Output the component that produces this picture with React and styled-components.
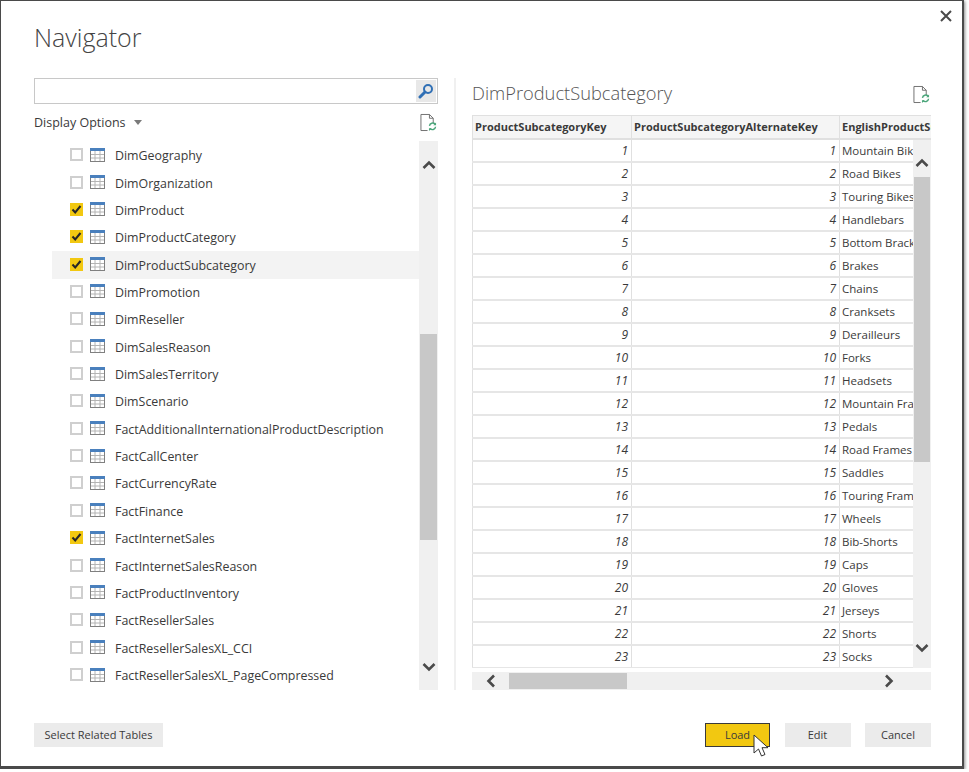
import React from "react";
import styled, { createGlobalStyle } from "styled-components";

const tables = [
  ["DimGeography", false],
  ["DimOrganization", false],
  ["DimProduct", true],
  ["DimProductCategory", true],
  ["DimProductSubcategory", true, true],
  ["DimPromotion", false],
  ["DimReseller", false],
  ["DimSalesReason", false],
  ["DimSalesTerritory", false],
  ["DimScenario", false],
  ["FactAdditionalInternationalProductDescription", false],
  ["FactCallCenter", false],
  ["FactCurrencyRate", false],
  ["FactFinance", false],
  ["FactInternetSales", true],
  ["FactInternetSalesReason", false],
  ["FactProductInventory", false],
  ["FactResellerSales", false],
  ["FactResellerSalesXL_CCI", false],
  ["FactResellerSalesXL_PageCompressed", false],
];

const subcategories = [
  "Mountain Bikes",
  "Road Bikes",
  "Touring Bikes",
  "Handlebars",
  "Bottom Brackets",
  "Brakes",
  "Chains",
  "Cranksets",
  "Derailleurs",
  "Forks",
  "Headsets",
  "Mountain Frames",
  "Pedals",
  "Road Frames",
  "Saddles",
  "Touring Frames",
  "Wheels",
  "Bib-Shorts",
  "Caps",
  "Gloves",
  "Jerseys",
  "Shorts",
  "Socks",
  "Tights",
];

const TableIcon = () => (
  <svg width="15" height="14" viewBox="0 0 15 14">
    <rect x="0.5" y="0.5" width="14" height="13" fill="#fff" stroke="#808080" />
    <rect x="0" y="0" width="15" height="3" fill="#4a80bd" />
    <path d="M5 3v10M10 3v10M1 6.500h13M1 10h13" stroke="#b4b4b4" fill="none" />
  </svg>
);

const RefreshIcon = () => (
  <svg width="17" height="19" viewBox="0 0 18 19">
    <path d="M1 1h9l4 4v5M10 1v4h4M8 18H1V1" fill="none" stroke="#6b6b6b" />
    <path d="M10 13a3.400 3.400 0 0 1 6-1.600M16.500 14a3.400 3.400 0 0 1-6 1.800" fill="none" stroke="#4aa57a" strokeWidth="1.500" />
    <path d="M17 9.500v3h-3zM9.500 18.500v-3h3z" fill="#4aa57a" />
  </svg>
);

const SearchIcon = () => (
  <svg width="16" height="16" viewBox="0 0 16 16">
    <circle cx="10" cy="6" r="4" fill="none" stroke="#2f6fb5" strokeWidth="2" />
    <path d="M7 9l-5 5" stroke="#2f6fb5" strokeWidth="3" strokeLinecap="round" />
  </svg>
);

const Chevron = ({ dir }) => {
  const paths = {
    up: "M1.500 8L7 2.500 12.500 8",
    down: "M1.500 2L7 7.500 12.500 2",
    left: "M8 1.500L2.500 7 8 12.500",
    right: "M2 1.500L7.500 7 2 12.500",
  };
  const wide = dir === "up" || dir === "down";
  return (
    <svg width={wide ? 14 : 10} height={wide ? 10 : 14} viewBox={wide ? "0 0 14 10" : "0 0 10 14"}>
      <path d={paths[dir]} fill="none" stroke="#4a4a4a" strokeWidth="2.600" />
    </svg>
  );
};

const CheckMark = () => (
  <svg width="11" height="11" viewBox="0 0 11 11">
    <path d="M1.500 5.500L4.200 8.500L9.500 2" fill="none" stroke="#262626" strokeWidth="2" />
  </svg>
);

const App = () => {
  return (
    <>
      <GlobalStyle />
      <Dialog>
        <TopBar>
          <Title>Navigator</Title>
          <CloseButton>
            <svg width="12" height="12" viewBox="0 0 12 12">
              <path d="M1 1l10 10M11 1L1 11" stroke="#4a4a4a" strokeWidth="2" />
            </svg>
          </CloseButton>
        </TopBar>
        <Body>
          <LeftPane>
            <SearchBox>
              <SearchButton>
                <SearchIcon />
              </SearchButton>
            </SearchBox>
            <OptionsRow>
              <DisplayOptions>
                Display Options
                <Caret />
              </DisplayOptions>
              <RefreshIcon />
            </OptionsRow>
            <ListArea>
              <List>
                {tables.map(([name, checked, selected]) => (
                  <ListRow key={name} $selected={selected}>
                    <Checkbox $checked={checked}>{checked && <CheckMark />}</Checkbox>
                    <TableIcon />
                    <RowLabel>{name}</RowLabel>
                  </ListRow>
                ))}
              </List>
              <VTrack $width={19}>
                <ArrowBox $height={48}>
                  <Chevron dir="up" />
                </ArrowBox>
                <VThumb $top={145} $height={206} />
                <ArrowBox $height={46} $end>
                  <Chevron dir="down" />
                </ArrowBox>
              </VTrack>
            </ListArea>
          </LeftPane>
          <Divider />
          <RightPane>
            <PreviewHead>
              <PreviewTitle>DimProductSubcategory</PreviewTitle>
              <RefreshIcon />
            </PreviewHead>
            <Grid>
              <HeaderRow>
                <HeaderCell>ProductSubcategoryKey</HeaderCell>
                <HeaderCell>ProductSubcategoryAlternateKey</HeaderCell>
                <HeaderCell>EnglishProductSubcategoryName</HeaderCell>
              </HeaderRow>
              <GridMiddle>
                <Rows>
                  {subcategories.map((name, i) => (
                    <DataRow key={name}>
                      <NumCell>{i + 1}</NumCell>
                      <NumCell>{i + 1}</NumCell>
                      <TextCell>{name}</TextCell>
                    </DataRow>
                  ))}
                </Rows>
                <VTrack $width={18}>
                  <ArrowBox $height={37} $pad={9}>
                    <Chevron dir="up" />
                  </ArrowBox>
                  <VThumb $top={0} $height={285} />
                  <ArrowBox $height={40} $end>
                    <Chevron dir="down" />
                  </ArrowBox>
                </VTrack>
              </GridMiddle>
              <HTrack>
                <HArrow $width={37}>
                  <Chevron dir="left" />
                </HArrow>
                <HThumb />
                <HArrow $width={84} $end>
                  <Chevron dir="right" />
                </HArrow>
              </HTrack>
            </Grid>
          </RightPane>
        </Body>
        <Footer>
          <FooterButton $width={129}>Select Related Tables</FooterButton>
          <FooterActions>
            <LoadButton>
              Load
              <Pointer>
                <svg width="16" height="24" viewBox="0 0 16 24">
                  <path
                    d="M1 1v18l4.500-4 3 7 3.500-1.500-3-6.800h6z"
                    fill="#fff"
                    stroke="#333"
                    strokeWidth="1"
                  />
                </svg>
              </Pointer>
            </LoadButton>
            <FooterButton $width={66}>Edit</FooterButton>
            <FooterButton $width={66}>Cancel</FooterButton>
          </FooterActions>
        </Footer>
      </Dialog>
    </>
  );
};

export default App;

const GlobalStyle = createGlobalStyle`
  html, body {
    margin: 0;
    padding: 0;
    background: #fff;
  }
  body {
    font-family: "Open Sans", "Noto Sans", sans-serif;
    color: #3a3a3a;
  }
`;

const Dialog = styled.div`
  box-sizing: border-box;
  width: 964px;
  height: 769px;
  background: #fff;
  border: solid #4a4a4a;
  border-width: 1px 2px 3px 1px;
  box-shadow: 1px 1px 3px #8a8a8a;
  padding: 0 31px 0 33px;
  display: flex;
  flex-direction: column;
`;

const TopBar = styled.div`
  height: 77px;
  display: flex;
  justify-content: space-between;
  align-items: flex-start;
`;

const Title = styled.h1`
  margin: 19px 0 0;
  font-size: 25px;
  line-height: 34px;
  font-weight: 300;
  color: #444;
`;

const CloseButton = styled.div`
  margin: 9px -21px 0 0;
  display: flex;
`;

const Body = styled.div`
  height: 612px;
  display: flex;
`;

const LeftPane = styled.div`
  width: 404px;
  display: flex;
  flex-direction: column;
`;

const SearchBox = styled.div`
  box-sizing: border-box;
  height: 26px;
  border: 1px solid #c8c8c8;
  display: flex;
  justify-content: flex-end;
  align-items: center;
  padding-right: 1px;
`;

const SearchButton = styled.div`
  width: 20px;
  height: 22px;
  background: #e8e8e8;
  display: flex;
  align-items: center;
  justify-content: center;
`;

const OptionsRow = styled.div`
  height: 37px;
  display: flex;
  justify-content: space-between;
  align-items: center;
  padding-right: 1px;
`;

const DisplayOptions = styled.div`
  font-size: 12.500px;
  display: flex;
  align-items: center;
  gap: 8px;
`;

const Caret = styled.span`
  width: 0;
  height: 0;
  border-left: 4.500px solid transparent;
  border-right: 4.500px solid transparent;
  border-top: 5px solid #7a7a7a;
`;

const ListArea = styled.div`
  flex: 1;
  display: flex;
  min-height: 0;
`;

const List = styled.div`
  flex: 1;
  margin-left: 18px;
  padding-top: 1px;
  overflow: hidden;
`;

const ListRow = styled.div`
  height: 27.370px;
  display: flex;
  align-items: center;
  padding-left: 18px;
  background: ${(p) => (p.$selected ? "#f3f3f3" : "transparent")};

  > svg {
    margin-bottom: 2px;
  }
`;

const Checkbox = styled.span`
  box-sizing: border-box;
  width: 13px;
  height: 13px;
  margin: 0 7px 2px 0;
  display: flex;
  align-items: center;
  justify-content: center;
  background: ${(p) => (p.$checked ? "#f2c811" : "#fff")};
  border: ${(p) => (p.$checked ? "1px solid #f2c811" : "2px solid #cfcfcf")};
`;

const RowLabel = styled.span`
  margin-left: 10px;
  font-size: 12.400px;
  white-space: nowrap;
`;

const VTrack = styled.div`
  width: ${(p) => p.$width}px;
  flex: none;
  background: #f0f0f0;
  display: flex;
  flex-direction: column;
`;

const ArrowBox = styled.div`
  box-sizing: border-box;
  height: ${(p) => p.$height}px;
  padding-top: ${(p) => p.$pad || 0}px;
  margin-top: ${(p) => (p.$end ? "auto" : "0")};
  display: flex;
  align-items: center;
  justify-content: center;
`;

const VThumb = styled.div`
  margin: ${(p) => p.$top}px 1px 0;
  height: ${(p) => p.$height}px;
  background: #c8c8c8;
`;

const Divider = styled.div`
  width: 2px;
  margin: 0 16px 0 16px;
  background: #f0f0f0;
`;

const RightPane = styled.div`
  width: 459px;
  display: flex;
  flex-direction: column;
`;

const PreviewHead = styled.div`
  height: 37px;
  display: flex;
  justify-content: space-between;
  align-items: center;
  padding: 0 1px 4px 0;
  box-sizing: border-box;
`;

const PreviewTitle = styled.h2`
  margin: 0 0 4px;
  font-size: 18.300px;
  font-weight: 300;
  color: #555;
`;

const Grid = styled.div`
  flex: 1;
  min-height: 0;
  display: flex;
  flex-direction: column;
`;

const columns = "159px 208px 1fr";

const HeaderRow = styled.div`
  box-sizing: border-box;
  height: 25px;
  flex: none;
  display: grid;
  grid-template-columns: ${columns};
  overflow: hidden;
  background: #f5f5f5;
  border-top: 1px solid #e0e0e0;
  border-bottom: 2px solid #e0e0e0;
`;

const HeaderCell = styled.div`
  font-size: 11px;
  font-weight: 700;
  line-height: 22px;
  padding-left: 2px;
  white-space: nowrap;
  overflow: hidden;
  border-left: 1px solid #e0e0e0;
`;

const GridMiddle = styled.div`
  flex: 1;
  min-height: 0;
  display: flex;
  padding-bottom: 4px;
`;

const Rows = styled.div`
  flex: 1;
  min-width: 0;
  overflow: hidden;
`;

const DataRow = styled.div`
  box-sizing: border-box;
  height: 23px;
  display: grid;
  grid-template-columns: ${columns};
  border-bottom: 2px solid #e6e6e6;
`;

const NumCell = styled.div`
  font-size: 12px;
  font-style: italic;
  line-height: 21px;
  text-align: right;
  padding-right: 3px;
  border-left: 1px solid #e0e0e0;
`;

const TextCell = styled.div`
  font-size: 11.500px;
  line-height: 21px;
  padding-left: 2px;
  white-space: nowrap;
  overflow: hidden;
  border-left: 1px solid #e0e0e0;
`;

const HTrack = styled.div`
  height: 18px;
  flex: none;
  background: #f0f0f0;
  display: flex;
`;

const HArrow = styled.div`
  width: ${(p) => p.$width}px;
  margin-left: ${(p) => (p.$end ? "auto" : "0")};
  display: flex;
  align-items: center;
  justify-content: center;
`;

const HThumb = styled.div`
  width: 118px;
  margin: 1px 0;
  background: #c8c8c8;
`;

const Footer = styled.div`
  margin-top: 33px;
  display: flex;
  justify-content: space-between;
`;

const FooterActions = styled.div`
  display: flex;
  gap: 14.500px;
`;

const FooterButton = styled.div`
  box-sizing: border-box;
  width: ${(p) => p.$width}px;
  height: 24px;
  padding-bottom: 1px;
  background: #ebebeb;
  font-size: 11px;
  display: flex;
  align-items: center;
  justify-content: center;
`;

const LoadButton = styled.div`
  position: relative;
  box-sizing: border-box;
  width: 65px;
  height: 24px;
  padding-bottom: 1px;
  background: #f2c811;
  border: 1px solid #3a3a3a;
  font-size: 11px;
  display: flex;
  align-items: center;
  justify-content: center;
`;

const Pointer = styled.span`
  position: absolute;
  left: 47px;
  top: 10px;
  display: flex;
`;
